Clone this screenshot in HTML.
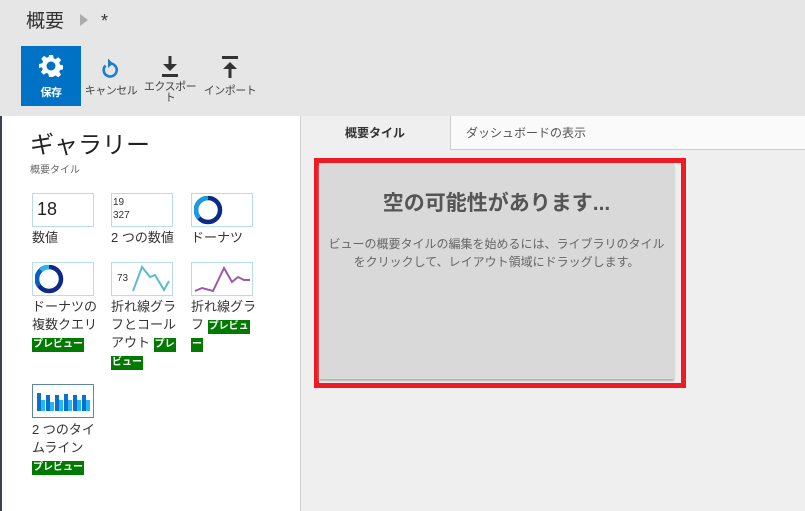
<!DOCTYPE html>
<html><head><meta charset="utf-8"><style>
*{margin:0;padding:0;box-sizing:border-box}
body{width:805px;height:511px;overflow:hidden;background:#e6e6e6;font-family:"Liberation Sans","Noto Sans CJK JP",sans-serif;color:#333;position:relative}
.a{position:absolute}
.lbl{font-size:12px;color:#444;text-align:center;white-space:nowrap;letter-spacing:-0.5px}
.tile{position:absolute;width:62px;height:34px;border:1px solid #b8dce8;background:#fff}
.cap{position:absolute;font-size:13px;line-height:18px;color:#333;width:66px}
.pv{background:#007a00;color:#fff;font-size:10px;font-weight:bold;padding:0 1px;line-height:14px;display:inline-block}
</style></head><body>
<div class="a" style="left:26px;top:6px;font-size:19px;color:#333">概要</div>
<svg class="a" style="left:80px;top:14px" width="8" height="12"><polygon points="0,0 8,6 0,12" fill="#aaa"/></svg>
<div class="a" style="left:101px;top:11px;font-size:18px;color:#333">*</div>

<div class="a" style="left:21px;top:46px;width:60px;height:60px;background:#0072c6"></div>
<svg class="a" style="left:39px;top:54px" width="24" height="24" viewBox="0 0 24 24"><path fill="#fff" d="M10 1h4l.6 3.2 2 .9 2.7-1.9 2.8 2.8-1.9 2.7.9 2 3.2.6v4l-3.2.6-.9 2 1.9 2.7-2.8 2.8-2.7-1.9-2 .9L14 23h-4l-.6-3.2-2-.9-2.7 1.9-2.8-2.8 1.9-2.7-.9-2L0 14v-4l3.2-.6.9-2L2.2 4.7 5 1.9l2.7 1.9 2-.9z"/><circle cx="12" cy="12" r="4.5" fill="#0072c6"/></svg>
<div class="a lbl" style="left:21px;top:84px;width:60px;color:#fff;font-size:11px;font-weight:bold">保存</div>

<svg class="a" style="left:100px;top:57px" width="20" height="22" viewBox="0 0 20 22"><path d="M5.5 8.5a6.5 6.5 0 1 0 4.5-2" fill="none" stroke="#1a7fd0" stroke-width="2.6"/><polygon points="8,1.5 13,6.5 8,11" fill="#1a7fd0"/></svg>
<div class="a lbl" style="left:83px;top:82px;width:56px;font-size:11px">キャンセル</div>

<svg class="a" style="left:160px;top:56px" width="20" height="22" viewBox="0 0 20 22"><rect x="8.5" y="0" width="3" height="11" fill="#333"/><polygon points="3,8 17,8 10,15" fill="#333"/><rect x="2" y="18" width="16" height="3" fill="#333"/></svg>
<div class="a lbl" style="left:140px;top:82px;width:60px;font-size:11px;line-height:11px">エクスポー<br>ト</div>

<svg class="a" style="left:220px;top:56px" width="20" height="22" viewBox="0 0 20 22"><rect x="2" y="0" width="16" height="3" fill="#333"/><polygon points="3,13 17,13 10,6" fill="#333"/><rect x="8.5" y="11" width="3" height="11" fill="#333"/></svg>
<div class="a lbl" style="left:200px;top:82px;width:60px;font-size:11px">インポート</div>

<div class="a" style="left:0;top:116px;width:300px;height:395px;background:#fff;border-left:2px solid #3c4250"></div>
<div class="a" style="left:30px;top:125px;font-size:24px;color:#222">ギャラリー</div>
<div class="a" style="left:30px;top:161px;font-size:10px;color:#666">概要タイル</div>

<div class="tile" style="left:32px;top:193px"><span class="a" style="left:4px;top:5px;font-size:18px;color:#222">18</span></div>
<div class="cap" style="left:32px;top:229px">数値</div>
<div class="tile" style="left:111px;top:193px"><span class="a" style="left:1px;top:2px;font-size:10px;line-height:13px;color:#333">19<br>327</span></div>
<div class="cap" style="left:111px;top:229px">2 つの数値</div>
<div class="tile" style="left:191px;top:193px"><svg class="a" style="left:2px;top:2px" width="30" height="30"><circle cx="14" cy="14" r="12" fill="none" stroke="#0d2a8a" stroke-width="4.5"/><path d="M14 2a12 12 0 0 0-9 20" fill="none" stroke="#1a9be0" stroke-width="4.5"/></svg></div>
<div class="cap" style="left:191px;top:229px">ドーナツ</div>

<div class="tile" style="left:32px;top:262px"><svg class="a" style="left:2px;top:2px" width="30" height="30"><circle cx="14" cy="14" r="12" fill="none" stroke="#0d2a8a" stroke-width="4.5"/><path d="M14 2a12 12 0 0 0-10 19" fill="none" stroke="#0a5fc0" stroke-width="4.5"/><path d="M14 2a12 12 0 0 0-8 3.5" fill="none" stroke="#28b8f0" stroke-width="4.5"/></svg></div>
<div class="cap" style="left:32px;top:298px">ドーナツの複数クエリ<br><span class="pv">プレビュー</span></div>
<div class="tile" style="left:111px;top:262px"><span class="a" style="left:5px;top:10px;font-size:10px;color:#333">73</span><svg class="a" style="left:0;top:0" width="62" height="34"><polyline points="21,28 30,4 38,14 43,12 52,27 57,18" fill="none" stroke="#5bbccc" stroke-width="2"/></svg></div>
<div class="cap" style="left:111px;top:298px">折れ線グラフとコールアウト <span class="pv">プレ</span><br><span class="pv">ビュー</span></div>
<div class="tile" style="left:191px;top:262px"><svg class="a" style="left:0;top:0" width="62" height="34"><polyline points="3,28 10,25 21,28 32,5 40,19 46,14 52,17 58,17" fill="none" stroke="#9b59a8" stroke-width="2"/></svg></div>
<div class="cap" style="left:191px;top:298px">折れ線グラフ <span class="pv">プレビュ</span><br><span class="pv">ー</span></div>

<div class="tile" style="left:32px;top:384px;border-color:#5c86a6"><svg class="a" style="left:0;top:0" width="62" height="34"><g fill="#0d6fc7"><rect x="4" y="8" width="4" height="18"/><rect x="13" y="10" width="4" height="16"/><rect x="22" y="10" width="4" height="16"/><rect x="31" y="9" width="4" height="17"/><rect x="40" y="10" width="4" height="16"/><rect x="49" y="10" width="4" height="16"/></g><g fill="#22b8f2"><rect x="8" y="15" width="4" height="11"/><rect x="17" y="17" width="4" height="9"/><rect x="26" y="15" width="4" height="11"/><rect x="35" y="15" width="4" height="11"/><rect x="44" y="15" width="4" height="11"/><rect x="53" y="15" width="4" height="11"/></g></svg></div>
<div class="cap" style="left:32px;top:421px">2 つのタイムライン<br><span class="pv">プレビュー</span></div>

<div class="a" style="left:300px;top:116px;width:505px;height:395px;background:#efefef;border-left:1px solid #d0d0d0"></div>
<div class="a" style="left:450px;top:116px;width:355px;height:34px;background:#fafafa;border-left:1px solid #ccc;border-bottom:1px solid #ccc"></div>
<div class="a" style="left:345px;top:124px;font-size:12px;font-weight:bold;color:#333">概要タイル</div>
<div class="a" style="left:466px;top:124px;font-size:12px;color:#555">ダッシュボードの表示</div>

<div class="a" style="left:314px;top:158px;width:372px;height:230px;border:5px solid #ed1c24;background:#efefef"></div>
<div class="a" style="left:319px;top:163px;width:355px;height:216px;background:#d9d9d9;box-shadow:0 2px 2px #b0b0b0"></div>
<div class="a" style="left:319px;top:187px;width:355px;text-align:center;font-size:21px;font-weight:bold;color:#555">空の可能性があります...</div>
<div class="a" style="left:326px;top:235px;width:341px;text-align:center;font-size:12px;line-height:18px;color:#666">ビューの概要タイルの編集を始めるには、ライブラリのタイルをクリックして、レイアウト領域にドラッグします。</div>
</body></html>
